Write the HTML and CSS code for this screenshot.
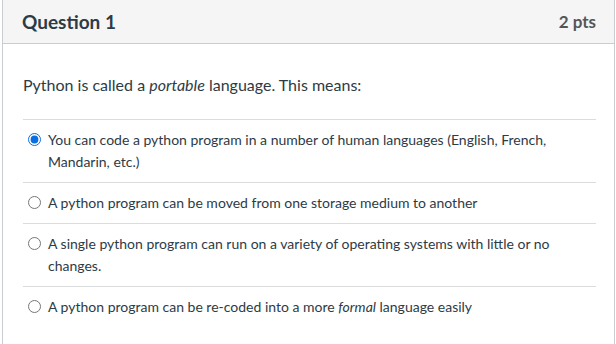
FILE: index.html
```html
<!DOCTYPE html>
<html>
    <head>
        <title>Question 1</title>
        <meta charset="UTF-8">
        <link rel="stylesheet" href="styles.css">
    </head>
    <body>
        <div class="quiz">
            <div class="quiz-header">
                <h2>Question 1</h2>
                <span class="pts">2 pts</span>
            </div>
            <div class="quiz-body">
                <p class="question">Python is called a <em>portable</em> language. This means:</p>
                <ul class="answers">
                    <li>
                        <input type="radio" name="q1" checked>
                        <label>You can code a python program in a number of human languages (English, French, Mandarin, etc.)</label>
                    </li>
                    <li>
                        <input type="radio" name="q1">
                        <label>A python program can be moved from one storage medium to another</label>
                    </li>
                    <li>
                        <input type="radio" name="q1">
                        <label>A single python program can run on a variety of operating systems with little or no changes.</label>
                    </li>
                    <li>
                        <input type="radio" name="q1">
                        <label>A python program can be re-coded into a more <em>formal</em> language easily</label>
                    </li>
                </ul>
            </div>
        </div>
    </body>
</html>
```

FILE: styles.css
```css
* {
    margin: 0;
    padding: 0;
    list-style: none;
    box-sizing: border-box;
}

body {
    font-family: Lato, "Liberation Sans", sans-serif;
    color: #2d3b45;
    background: #fff;
}

.quiz {
    width: 613px;
    margin-left: 2px;
    border-left: 1px solid #c7cdd1;
    border-right: 1px solid #c7cdd1;
}

.quiz-header {
    height: 44px;
    display: flex;
    align-items: center;
    justify-content: space-between;
    padding: 0 18px 0 19px;
    background: #f5f5f5;
    border-bottom: 1px solid #c7cdd1;
}

.quiz-header h2 {
    font-size: 19px;
    font-weight: bold;
    color: #2d3b45;
}

.quiz-header .pts {
    font-size: 17px;
    font-weight: bold;
    color: #555;
}

.quiz-body {
    padding: 0 18px 18px 20px;
}

.question {
    font-size: 16px;
    line-height: 22px;
    padding: 30px 0 23px;
}

.answers li {
    display: flex;
    align-items: flex-start;
    border-top: 1px solid #dadcde;
    padding: 9px 0;
    font-size: 14px;
    line-height: 22px;
}

.answers input {
    flex: none;
    width: 13px;
    height: 13px;
    margin: 4px 7px 0 5px;
    accent-color: #0b6ee0;
}

.answers label {
    padding-right: 40px;
}
```
